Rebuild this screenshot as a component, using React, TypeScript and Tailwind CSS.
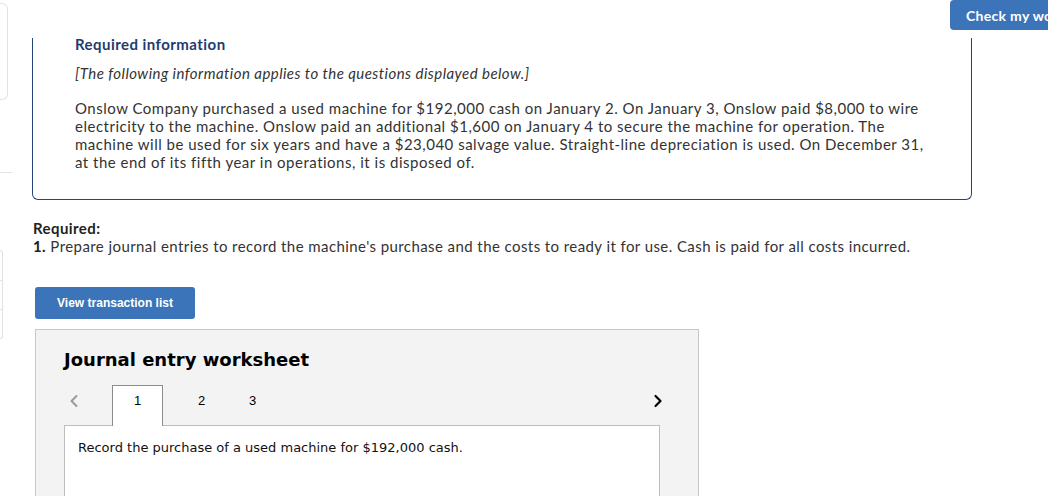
import { ChevronLeft, ChevronRight } from "lucide-react";

const body = { fontFamily: "Lato, 'Liberation Sans', sans-serif" };
const verdana = { fontFamily: "'DejaVu Sans', Verdana, sans-serif" };
const arial = { fontFamily: "'Liberation Sans', Arial, sans-serif" };

const SideStrip = () => (
  <div className="w-[32px] shrink-0 flex flex-col">
    <div className="mt-[3px] h-[97px] w-[8px] shrink-0 rounded-r-[6px] border border-l-0 border-[#e2e2e2]" />
    <div className="mt-[72px] h-px w-[12px] shrink-0 bg-[#e4e4e4]" />
    <div className="mt-[77px] w-[3px] shrink-0 rounded-r-[3px] border border-l-0 border-[#e2e2e2] flex flex-col">
      <div className="h-[30px] border-b border-[#e2e2e2]" />
      <div className="h-[29px] border-b border-[#e2e2e2]" />
      <div className="h-[28px]" />
    </div>
  </div>
);

const Worksheet = () => (
  <div className="ml-[3px] mt-[10px] w-[664px] shrink-0 border border-[#c8c8c8] bg-[#f3f3f3] pl-[28px] pt-[19px]">
    <h2 className="text-[18px] font-bold leading-[22px] text-black" style={verdana}>
      Journal entry worksheet
    </h2>
    <div className="mt-[14px] flex w-[604px] items-start" style={arial}>
      <div className="flex h-[40px] w-[48px] items-start pt-[6px] text-[#9a9a9a]">
        <ChevronLeft className="h-[20px] w-[20px]" strokeWidth={2.4} />
      </div>
      <div className="relative z-10 -mb-px flex h-[41px] w-[51px] justify-center border border-b-0 border-[#8c8c8c] bg-white pt-[7px] text-[13px] leading-[16px] text-black">
        1
      </div>
      <div className="ml-[13px] flex h-[40px] w-[51px] justify-center pt-[8px] text-[13px] leading-[16px] text-black">2</div>
      <div className="flex h-[40px] w-[51px] justify-center pt-[8px] text-[13px] leading-[16px] text-black">3</div>
      <div className="ml-auto flex h-[40px] items-start pt-[6px] text-black">
        <ChevronRight className="h-[20px] w-[20px]" strokeWidth={2.6} />
      </div>
    </div>
    <div className="h-[80px] w-[596px] border border-b-0 border-[#bdbdbd] bg-white pl-[13px] pt-[13px]">
      <p className="text-[13px] leading-[18px] text-[#111]" style={verdana}>
        Record the purchase of a used machine for $192,000 cash.
      </p>
    </div>
  </div>
);

export default function App() {
  return (
    <div className="flex h-[496px] w-[1048px] overflow-hidden bg-white" style={body}>
      <SideStrip />
      <div className="flex min-w-0 flex-1 flex-col tracking-[0.45px]">
        <div className="flex h-[38px] shrink-0 justify-end">
          <button
            className="mr-[-34px] h-[30px] w-[132px] shrink-0 whitespace-nowrap rounded-[4px] bg-[#3b74b8] px-[16px] text-left text-[14px] font-bold tracking-[0.3px] text-white"
            style={body}
          >
            Check my work
          </button>
        </div>

        <div className="w-[940px] shrink-0 rounded-b-[6px] border border-t-0 border-[#23467a] pl-[42px] pb-[28px]">
          <h1 className="-mt-[3px] text-[15px] font-bold leading-[18px] text-[#1f3c6e]">Required information</h1>
          <p className="mt-[11px] text-[15px] italic leading-[18px] text-[#333]">
            [The following information applies to the questions displayed below.]
          </p>
          <p className="mt-[17px] text-[15px] leading-[18px] tracking-[0.5px] text-[#333]">
            Onslow Company purchased a used machine for $192,000 cash on January 2. On January 3, Onslow paid $8,000 to wire
            <br />
            electricity to the machine. Onslow paid an additional $1,600 on January 4 to secure the machine for operation. The
            <br />
            machine will be used for six years and have a $23,040 salvage value. Straight-line depreciation is used. On December 31,
            <br />
            at the end of its fifth year in operations, it is disposed of.
          </p>
        </div>

        <div className="ml-px mt-[19px] shrink-0 text-[15px] leading-[18px] tracking-[0.42px] text-[#222]">
          <p className="font-bold">Required:</p>
          <p className="text-[#333]">
            <span className="font-bold text-[#222]">1.</span> Prepare journal entries to record the machine's purchase and
            the costs to ready it for use. Cash is paid for all costs incurred.
          </p>
        </div>

        <button
          className="ml-[3px] mt-[32px] h-[32px] w-[160px] shrink-0 rounded-[3px] bg-[#3b74b8] text-[12px] font-bold tracking-normal text-white"
          style={arial}
        >
          View transaction list
        </button>

        <div className="tracking-normal">
          <Worksheet />
        </div>
      </div>
    </div>
  );
}
